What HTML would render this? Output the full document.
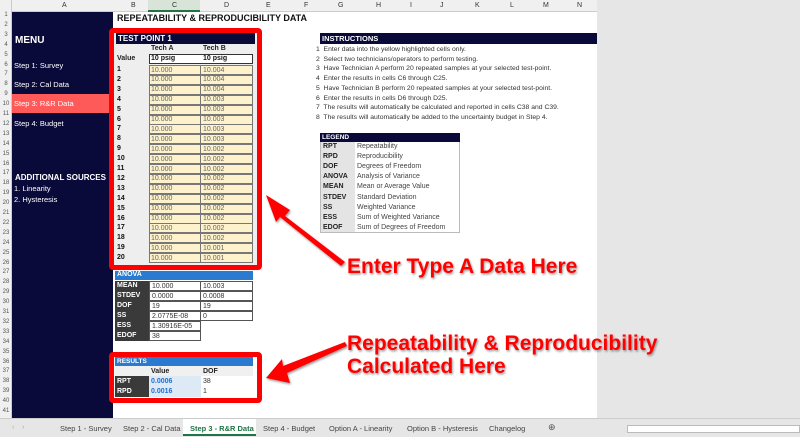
<!DOCTYPE html>
<html><head><style>
*{margin:0;padding:0;box-sizing:border-box}
body{width:800px;height:437px;overflow:hidden;background:#e6e6e6;font-family:"Liberation Sans",sans-serif;position:relative}
.a{position:absolute;white-space:nowrap}
.s{font-size:7px;color:#333}
.b{font-weight:bold}
</style></head><body>
<div class="a" style="left:0;top:0;width:597px;height:418px;background:#fff"></div>
<div class="a" style="left:0;top:0;width:597px;height:12px;background:#f0f0f0;border-bottom:1px solid #ccc"></div>
<div class="a" style="left:0;top:0;width:12px;height:418px;background:#f0f0f0;border-right:1px solid #ccc"></div>
<div class="a s" style="left:62px;top:2px">A</div><div class="a s" style="left:131px;top:2px">B</div>
<div class="a" style="left:148px;top:0;width:52px;height:12px;background:#d8e4d8;border-bottom:2px solid #217346"></div>
<div class="a s" style="left:172px;top:2px">C</div><div class="a s" style="left:224px;top:2px">D</div><div class="a s" style="left:266px;top:2px">E</div><div class="a s" style="left:304px;top:2px">F</div><div class="a s" style="left:338px;top:2px">G</div><div class="a s" style="left:376px;top:2px">H</div><div class="a s" style="left:410px;top:2px">I</div><div class="a s" style="left:440px;top:2px">J</div><div class="a s" style="left:475px;top:2px">K</div><div class="a s" style="left:510px;top:2px">L</div><div class="a s" style="left:543px;top:2px">M</div><div class="a s" style="left:577px;top:2px">N</div>
<div id="rn"></div>
<div class="a" style="left:12px;top:12px;width:101px;height:406px;background:#0a0a3a"></div>
<div class="a" style="left:12px;top:94px;width:101px;height:19px;background:#ff5a5a"></div>
<div class="a b" style="left:15px;top:35px;color:#fff;font-size:10px">MENU</div>
<div class="a" style="left:14px;top:61px;color:#fff;font-size:7.5px">Step 1: Survey</div>
<div class="a" style="left:14px;top:80px;color:#fff;font-size:7.5px">Step 2: Cal Data</div>
<div class="a" style="left:14px;top:99px;color:#fff;font-size:7.5px">Step 3: R&amp;R Data</div>
<div class="a" style="left:14px;top:119px;color:#fff;font-size:7.5px">Step 4: Budget</div>
<div class="a b" style="left:15px;top:173px;color:#fff;font-size:8px">ADDITIONAL SOURCES</div>
<div class="a" style="left:14px;top:184px;color:#fff;font-size:7.5px">1. Linearity</div>
<div class="a" style="left:14px;top:195px;color:#fff;font-size:7.5px">2. Hysteresis</div>
<div class="a b" style="left:117px;top:13px;font-size:9px;color:#111">REPEATABILITY &amp; REPRODUCIBILITY DATA</div>
<div class="a" style="left:114px;top:32px;width:143px;height:234px;background:#eee"></div>
<div class="a b" style="left:116px;top:33px;width:139px;height:11px;background:#0a0a3a;color:#fff;font-size:8px;padding:1px 2px">TEST POINT 1</div>
<div class="a b s" style="left:151px;top:45px;color:#222">Tech A</div><div class="a b s" style="left:203px;top:45px;color:#222">Tech B</div>
<div class="a b s" style="left:117px;top:55px;color:#222">Value</div>
<div class="a" style="left:149px;top:54px;width:104px;height:10px;background:#fff;border:1px solid #333"></div>
<div class="a b s" style="left:151px;top:55px;color:#111">10 psig</div><div class="a b s" style="left:203px;top:55px;color:#111">10 psig</div>
<div id="rows"></div>
<div class="a b" style="left:115px;top:271px;width:138px;height:9px;background:#2a7ad0;color:#fff;font-size:7px;padding:0 2px">ANOVA</div>
<div id="an"></div>
<div class="a b" style="left:115px;top:357px;width:138px;height:9px;background:#2a7ad0;color:#fff;font-size:6.5px;padding:1px 2px">RESULTS</div>
<div class="a" style="left:115px;top:366px;width:138px;height:10px;background:#f0f0f0"></div>
<div class="a b s" style="left:151px;top:368px;color:#222">Value</div><div class="a b s" style="left:203px;top:368px;color:#222">DOF</div>
<div class="a" style="left:115px;top:376px;width:34px;height:21px;background:#3a3a3a"></div>
<div class="a" style="left:149px;top:376px;width:52px;height:21px;background:#ddeaf6"></div>
<div class="a b" style="left:117px;top:378px;color:#fff;font-size:7px">RPT</div><div class="a b" style="left:117px;top:388px;color:#fff;font-size:7px">RPD</div>
<div class="a b" style="left:151px;top:378px;color:#1f6fd0;font-size:7px">0.0006</div><div class="a b" style="left:151px;top:388px;color:#1f6fd0;font-size:7px">0.0016</div>
<div class="a s" style="left:203px;top:378px">38</div><div class="a s" style="left:203px;top:388px">1</div>
<div class="a" style="left:109px;top:28px;width:153px;height:242px;border:5px solid #f00;border-radius:4px"></div>
<div class="a" style="left:109px;top:352px;width:153px;height:51px;border:5px solid #f00;border-radius:4px"></div>
<div class="a b" style="left:320px;top:33px;width:277px;height:11px;background:#0a0a3a;color:#fff;font-size:7.5px;padding:1px 2px">INSTRUCTIONS</div>
<div id="ins"></div>
<div class="a" style="left:320px;top:133px;width:140px;height:100px;border:1px solid #bbb"></div>
<div class="a" style="left:321px;top:142px;width:34px;height:90px;background:#e4e4e4"></div>
<div class="a b" style="left:320px;top:133px;width:140px;height:9px;background:#0a0a3a;color:#fff;font-size:6.5px;padding:1px 2px">LEGEND</div>
<div id="leg"></div>
<svg class="a" style="left:0;top:0" width="800" height="437">
<defs><filter id="sh"><feDropShadow dx="1" dy="1.5" stdDeviation="1" flood-color="#000" flood-opacity=".4"/></filter></defs>
<g fill="#f00" filter="url(#sh)">
<polygon points="345,262 285,216 290,210 266,195 276,222 280,217 341,266"/>
<polygon points="345,342 283,366 282,359 266,378 290,383 287,373 347,346"/>
</g>
<g font-family="Liberation Sans,sans-serif" font-weight="bold" fill="#f00" filter="url(#sh)">
<text x="347" y="273" font-size="21">Enter Type A Data Here</text>
<text x="347" y="350" font-size="21">Repeatability &amp; Reproducibility</text>
<text x="347" y="373" font-size="21">Calculated Here</text>
</g></svg>
<div class="a" style="left:0;top:418px;width:800px;height:19px;background:#e6e6e6;border-top:1px solid #ccc"></div>
<div class="a" style="left:12px;top:424px;font-size:7px;color:#aaa">‹ &nbsp;&nbsp; ›</div>
<div class="a" style="left:183px;top:419px;width:73px;height:17px;background:#fff;border-bottom:2px solid #217346"></div>
<div class="a" style="left:60px;top:424px;font-size:7.5px;color:#444">Step 1 - Survey</div>
<div class="a" style="left:123px;top:424px;font-size:7.5px;color:#444">Step 2 - Cal Data</div>
<div class="a b" style="left:190px;top:424px;font-size:7.5px;color:#217346">Step 3 - R&amp;R Data</div>
<div class="a" style="left:263px;top:424px;font-size:7.5px;color:#444">Step 4 - Budget</div>
<div class="a" style="left:329px;top:424px;font-size:7.5px;color:#444">Option A - Linearity</div>
<div class="a" style="left:407px;top:424px;font-size:7.5px;color:#444">Option B - Hysteresis</div>
<div class="a" style="left:489px;top:424px;font-size:7.5px;color:#444">Changelog</div>
<div class="a" style="left:548px;top:422px;font-size:9px;color:#555">⊕</div>
<div class="a" style="left:627px;top:425px;width:173px;height:8px;background:#fff;border:1px solid #bbb"></div>
<script>
function h(id,s){document.getElementById(id).innerHTML=s}
var s='';
for(var i=1;i<=41;i++){var y=12+(i-1)*9.9;s+='<div class="a" style="left:0;top:'+y+'px;width:12px;font-size:6px;color:#555;text-align:center">'+i+'</div>';}
h('rn',s);
s='';
for(var i=1;i<=20;i++){var y=65+(i-1)*9.9;var b=i<=3?'10.004':i<=8?'10.003':i<=18?'10.002':'10.001';
s+='<div class="a b s" style="left:117px;top:'+(y+1)+'px;color:#111">'+i+'</div>';
s+='<div class="a" style="left:149px;top:'+y+'px;width:52px;height:10px;background:#fdf2cc;border:1px solid #777"></div>';
s+='<div class="a" style="left:200px;top:'+y+'px;width:53px;height:10px;background:#fdf2cc;border:1px solid #777"></div>';
s+='<div class="a s" style="left:151px;top:'+(y+1.5)+'px;color:#666">10.000</div><div class="a s" style="left:203px;top:'+(y+1.5)+'px;color:#666">'+b+'</div>';}
h('rows',s);
var an=[['MEAN','10.000','10.003'],['STDEV','0.0000','0.0008'],['DOF','19','19'],['SS','2.0775E-08','0'],['ESS','1.30916E-05',''],['EDOF','38','']];
s='';
an.forEach(function(r,i){var y=281+i*10;
s+='<div class="a b" style="left:115px;top:'+y+'px;width:34px;height:10px;background:#3a3a3a;color:#fff;font-size:7px;padding:1px 2px">'+r[0]+'</div>';
s+='<div class="a s" style="left:149px;top:'+y+'px;width:52px;height:10px;border:1px solid #555;padding:1px 2px">'+r[1]+'</div>';
if(i<4)s+='<div class="a s" style="left:200px;top:'+y+'px;width:53px;height:10px;border:1px solid #555;padding:1px 2px">'+r[2]+'</div>';});
h('an',s);
var ins=['Enter data into the yellow highlighted cells only.','Select two technicians/operators to perform testing.','Have Technician A perform 20 repeated samples at your selected test-point.','Enter the results in cells C6 through C25.','Have Technician B perform 20 repeated samples at your selected test-point.','Enter the results in cells D6 through D25.','The results will automatically be calculated and reported in cells C38 and C39.','The results will automatically be added to the uncertainty budget in Step 4.'];
s='';ins.forEach(function(t,i){var y=46+i*9.7;s+='<div class="a s" style="left:316px;top:'+y+'px;font-size:6.8px">'+(i+1)+'&nbsp; '+t+'</div>';});
h('ins',s);
var lg=[['RPT','Repeatability'],['RPD','Reproducibility'],['DOF','Degrees of Freedom'],['ANOVA','Analysis of Variance'],['MEAN','Mean or Average Value'],['STDEV','Standard Deviation'],['SS','Weighted Variance'],['ESS','Sum of Weighted Variance'],['EDOF','Sum of Degrees of Freedom']];
s='';lg.forEach(function(r,i){var y=143+i*10.1;s+='<div class="a b s" style="left:323px;top:'+y+'px;color:#222">'+r[0]+'</div><div class="a s" style="left:357px;top:'+y+'px;color:#444">'+r[1]+'</div>';});
h('leg',s);
</script>
</body></html>
